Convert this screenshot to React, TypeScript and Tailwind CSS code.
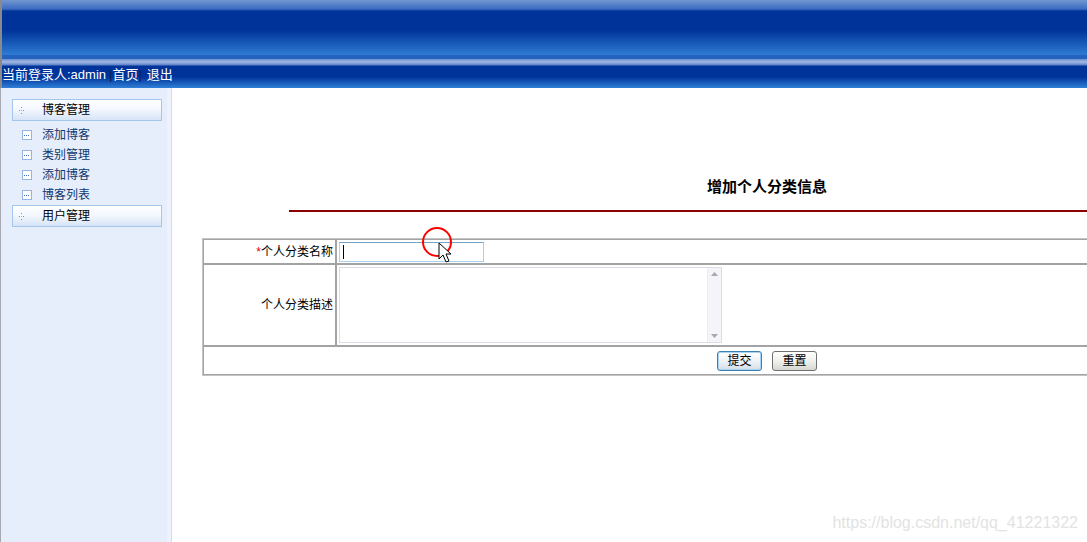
import React from 'react';

const font = "font-['Liberation_Sans','Noto_Sans_CJK_SC',sans-serif]";

function GroupIcon() {
  return (
    <svg width="6" height="7" viewBox="0 0 6 7" className="shrink-0">
      <rect x="2" y="0" width="1" height="1" fill="#6d95cf" />
      <rect x="0" y="3" width="1" height="1" fill="#6d95cf" />
      <rect x="4" y="3" width="1" height="1" fill="#6d95cf" />
      <rect x="2" y="6" width="1" height="1" fill="#6d95cf" />
      <rect x="2" y="3" width="1" height="1" fill="#9ab8e2" />
    </svg>
  );
}

function ItemIcon() {
  return (
    <svg width="10" height="10" viewBox="0 0 10 10" className="shrink-0">
      <rect x="0.5" y="0.5" width="9" height="9" fill="#ffffff" stroke="#94b6e4" />
      <rect x="2" y="5" width="1" height="1" fill="#3b6fc0" />
      <rect x="4" y="5" width="1" height="1" fill="#3b6fc0" />
      <rect x="6" y="5" width="1" height="1" fill="#3b6fc0" />
    </svg>
  );
}

function GroupHeader({ title }: { title: string }) {
  return (
    <div className="flex h-[22px] items-center border border-[#a4c6ec] bg-[linear-gradient(to_bottom,#ffffff_0%,#f4f8fe_45%,#d6e4f7_100%)] pl-[6px]">
      <GroupIcon />
      <span className="ml-[17px] text-[12px] leading-none text-black">{title}</span>
    </div>
  );
}

const items = ['添加博客', '类别管理', '添加博客', '博客列表'];

export default function App() {
  return (
    <div className={`relative flex h-[542px] w-[1087px] flex-col overflow-hidden bg-white ${font}`}>
      {/* Header */}
      <div className="border-l-2 border-[#8a8a8a]">
        <div className="h-[59px] bg-[linear-gradient(to_bottom,#7197d1_0px,#3c6bc1_9px,#003399_11px,#003399_30px,#0b47a9_37px,#2f7cd4_55px,#2462bf_55px,#2462bf_59px)]"></div>
        <div className="flex h-[29px] items-start bg-[linear-gradient(to_bottom,#6a8fd0_0px,#a2b9e3_3px,#5b81c8_6px,#003399_7px,#003399_18px,#2f80d8_29px)] pt-[8px] text-[13px] leading-[16px] text-white">
          <span>当前登录人:admin</span>
          <span className="ml-[3px] text-[#0a1f55]">|</span>
          <span>首页</span>
          <span className="text-[#0a1f55]">|</span>
          <span className="ml-[5px]">退出</span>
        </div>
      </div>

      <div className="flex flex-1">
        {/* Sidebar */}
        <aside className="w-[172px] shrink-0 border-r border-l border-[#d3ddf1] border-l-[#a8a8b0] bg-[linear-gradient(to_right,#e6eefb_0px,#e6eefb_166px,#edf2fd_166px)] px-[11px] pt-[11px]">
          <div className="w-[150px]">
            <GroupHeader title="博客管理" />
            <ul className="pt-[4px]">
              {items.map((item, i) => (
                <li key={i} className="flex h-[20px] items-center pl-[10px]">
                  <ItemIcon />
                  <span className="ml-[10px] text-[12px] leading-none text-[#0f3870]">{item}</span>
                </li>
              ))}
            </ul>
            <GroupHeader title="用户管理" />
          </div>
        </aside>

        {/* Main */}
        <main className="flex-1 overflow-hidden">
          <div className="ml-[30px] w-[1130px] pt-[89px]">
            <h2 className="text-center text-[15px] font-bold leading-[20px] text-black">增加个人分类信息</h2>
            <div className="mx-[87px] mt-[13px] h-[2px] bg-[#8b0000]"></div>

            <table className="mt-[26px] w-full border-separate border-spacing-0 border border-[#c4c4c4] text-[12px]">
              <tbody>
                <tr className="h-[25px]">
                  <td className="w-[133px] border border-[#a3a3a3] pr-[2px] text-right align-middle text-black">
                    <span className="text-[#e60000]">*</span>个人分类名称
                  </td>
                  <td className="border border-[#a3a3a3] pl-[2px] align-middle">
                    <div className="flex h-[20px] w-[145px] items-center border border-[#a9d0f0] border-t-[#7aa3c8] bg-white pl-[3px]">
                      <div className="h-[14px] w-px bg-black"></div>
                    </div>
                  </td>
                </tr>
                <tr className="h-[82px]">
                  <td className="border border-[#a3a3a3] pr-[2px] text-right align-middle text-black">个人分类描述</td>
                  <td className="border border-[#a3a3a3] pl-[2px] align-middle">
                    <div className="flex h-[76px] w-[383px] border border-[#d8dde6] bg-white">
                      <div className="flex-1"></div>
                      <div className="flex w-[14px] flex-col items-center justify-between border-l border-[#eceaf2] bg-[#f5f4f8] py-[4px]">
                        <svg width="7" height="4" viewBox="0 0 7 4"><path d="M0 4 L3.5 0 L7 4 Z" fill="#a8a8b4" /></svg>
                        <svg width="7" height="4" viewBox="0 0 7 4"><path d="M0 0 L3.5 4 L7 0 Z" fill="#a8a8b4" /></svg>
                      </div>
                    </div>
                  </td>
                </tr>
                <tr className="h-[29px]">
                  <td colSpan={2} className="border border-[#a3a3a3] align-middle">
                    <div className="flex items-center justify-center gap-[10px]">
                      <button className="h-[20px] w-[45px] rounded-[3px] border border-[#3c7fb1] bg-[linear-gradient(to_bottom,#ffffff_0%,#eef3f8_50%,#d4dde6_100%)] text-[12px] leading-none text-black shadow-[inset_0_0_0_1px_#a8d4f4]">提交</button>
                      <button className="h-[20px] w-[45px] rounded-[3px] border border-[#707070] bg-[linear-gradient(to_bottom,#ffffff_0%,#f0f0ec_50%,#d8d8d2_100%)] text-[12px] leading-none text-black">重置</button>
                    </div>
                  </td>
                </tr>
              </tbody>
            </table>
          </div>
        </main>
      </div>

      {/* screen-recording cursor highlight */}
      <svg className="absolute left-[420px] top-[226px]" width="36" height="42" viewBox="0 0 36 42">
        <circle cx="17" cy="16" r="14" fill="none" stroke="#ff0000" strokeWidth="2" />
        <path d="M19 17 L19 33 L23 29 L26 36 L29 35 L26 28 L31 28 Z" fill="#ffffff" stroke="#000000" strokeWidth="1" strokeLinejoin="round" />
      </svg>

      {/* watermark */}
      <div className="absolute right-[9px] top-[513px] font-['Liberation_Sans',sans-serif] text-[16px] leading-[20px] text-[#e3e3e3]">
        https://blog.csdn.net/qq_41221322
      </div>
    </div>
  );
}
